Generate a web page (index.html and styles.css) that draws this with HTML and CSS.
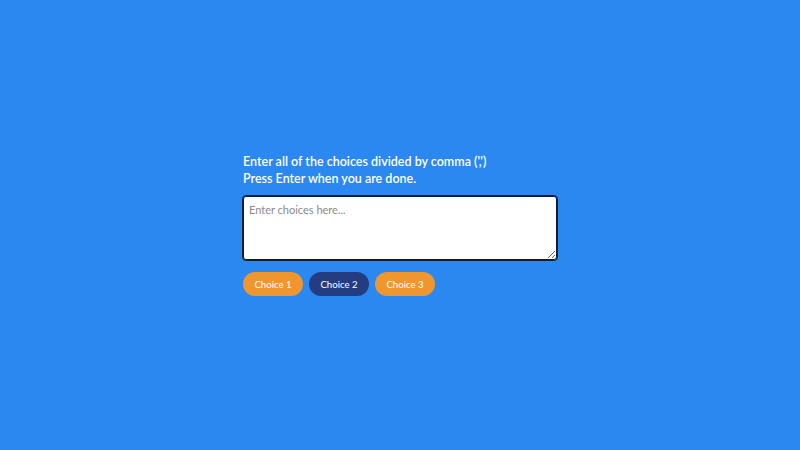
FILE: index.html
```html
<!DOCTYPE html>
<html lang="en">
<head>
<meta charset="utf-8">
<title>Random choice picker</title>
<link rel="stylesheet" href="styles.css">
</head>
<body>
<div class="container">
  <h3 class="title">Enter all of the choices divided by comma (',')<br>Press Enter when you are done.</h3>
  <textarea class="input" placeholder="Enter choices here..."></textarea>
  <div class="tags">
    <span class="tag">Choice 1</span>
    <span class="tag tag-active">Choice 2</span>
    <span class="tag">Choice 3</span>
  </div>
</div>
</body>
</html>
```
FILE: styles.css
```css
* { box-sizing: border-box; }
html, body { height: 100%; }
body {
  margin: 0;
  background: #2b88f0;
  font-family: Lato, "Open Sans", sans-serif;
  display: flex;
  align-items: center;
  justify-content: center;
}
.container {
  width: 314px;
  display: flex;
  flex-direction: column;
  margin-top: -1px;
}
.title {
  margin: 0 0 9px 0;
  color: #fff;
  font-size: 12.5px;
  font-weight: 600;
  line-height: 17px;
}
.input {
  display: block;
  width: 314px;
  height: 64px;
  border: 1px solid #0f1c33;
  outline: 1px solid #0f1c33;
  box-shadow: inset 0 0 0 1px #fff;
  border-radius: 3px;
  padding: 6px 5px;
  font-family: Lato, "Open Sans", sans-serif;
  font-size: 11px;
  resize: vertical;
  background: #fff;
  margin: 0;
}
.input::placeholder { color: #8a8a8a; }
.tags {
  display: flex;
  gap: 6px;
  margin-top: 12px;
}
.tag {
  display: inline-flex;
  align-items: center;
  justify-content: center;
  height: 24px;
  width: 60px;
  border-radius: 12px;
  background: #f0962f;
  color: #fff;
  font-size: 9.6px;
}
.tag-active { background: #233d80; }
```
